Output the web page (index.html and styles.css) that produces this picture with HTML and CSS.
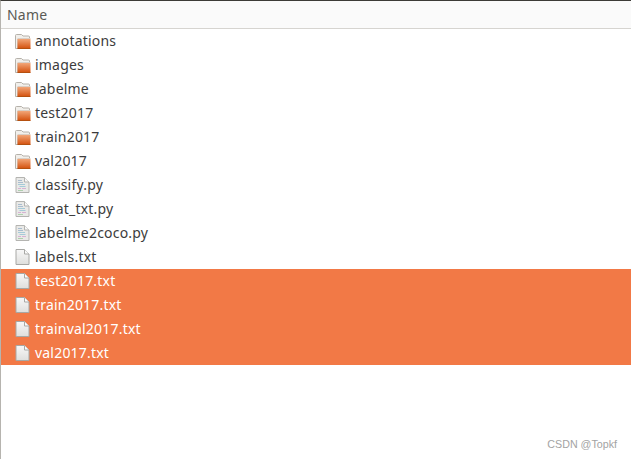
FILE: index.html
```html
<!DOCTYPE html>
<html lang="en">
  <head>
    <meta charset="UTF-8" />
    <title>Files</title>
    <link rel="stylesheet" href="styles.css">
  </head>
  <body>
    <svg class="defs" width="0" height="0">
      <defs>
        <linearGradient id="folder-fill" x1="0" y1="0" x2="0" y2="1">
          <stop offset="0" stop-color="#f2a678" />
          <stop offset="1" stop-color="#d4520f" />
        </linearGradient>
        <linearGradient id="page-fill" x1="0" y1="0" x2="0" y2="1">
          <stop offset="0" stop-color="#f8f8f8" />
          <stop offset="1" stop-color="#dfdfdd" />
        </linearGradient>
        <symbol id="folder" viewBox="0 0 16 16">
          <path d="M.5 15.500V2.500q0-1 1-1h5l1.500 1.500h5.500q1 0 1 1v2H3v9.500z" fill="#f1efeb" stroke="#b5b1aa" />
          <path d="M2.500 6h13v9.500h-13z" fill="url(#folder-fill)" />
          <path d="M2.500 5.500h13" stroke="#d9cfc6" fill="none" />
          <path d="M2.500 15.500h13" stroke="#b5500f" fill="none" />
        </symbol>
        <symbol id="text-file" viewBox="0 0 16 16">
          <path d="M1 .5h8.500l4.500 4.500v10.500H1z" fill="url(#page-fill)" stroke="#a8a8a5" />
          <path d="M9.500 .5v4.500h4.500" fill="#fbfbfb" stroke="#a8a8a5" />
        </symbol>
        <symbol id="script-file" viewBox="0 0 16 16">
          <path d="M1 .5h8.500l4.500 4.500v10.500H1z" fill="#e9e9e7" stroke="#b4b4b1" />
          <path d="M9.500 .5v4.500h4.500" fill="#f8f8f8" stroke="#b4b4b1" />
          <path d="M3 3.500h4M3 5.500h5" stroke="#a9bdcf" fill="none" />
          <path d="M3 7.500h7M4.500 9.500h6" stroke="#a5cad8" fill="none" />
          <path d="M3 11.500h3M7 11.500h4" stroke="#d6b3d3" fill="none" />
          <path d="M3 13.500h5" stroke="#aecfae" fill="none" />
        </symbol>
      </defs>
    </svg>

    <div class="header">Name</div>
    <ul class="file-list">
      <li class="row"><svg class="icon"><use href="#folder" /></svg>annotations</li>
      <li class="row"><svg class="icon"><use href="#folder" /></svg>images</li>
      <li class="row"><svg class="icon"><use href="#folder" /></svg>labelme</li>
      <li class="row"><svg class="icon"><use href="#folder" /></svg>test2017</li>
      <li class="row"><svg class="icon"><use href="#folder" /></svg>train2017</li>
      <li class="row"><svg class="icon"><use href="#folder" /></svg>val2017</li>
      <li class="row"><svg class="icon"><use href="#script-file" /></svg>classify.py</li>
      <li class="row"><svg class="icon"><use href="#script-file" /></svg>creat_txt.py</li>
      <li class="row"><svg class="icon"><use href="#script-file" /></svg>labelme2coco.py</li>
      <li class="row"><svg class="icon"><use href="#text-file" /></svg>labels.txt</li>
      <li class="row selected"><svg class="icon"><use href="#text-file" /></svg>test2017.txt</li>
      <li class="row selected"><svg class="icon"><use href="#text-file" /></svg>train2017.txt</li>
      <li class="row selected"><svg class="icon"><use href="#text-file" /></svg>trainval2017.txt</li>
      <li class="row selected"><svg class="icon"><use href="#text-file" /></svg>val2017.txt</li>
    </ul>
    <div class="watermark">CSDN @Topkf</div>
  </body>
</html>
```

FILE: styles.css
```css
html,
body {
  height: 100%;
}
body {
  margin: 0;
  box-sizing: border-box;
  border-top: 1px solid #3c3b37;
  border-left: 1px solid #b6b4af;
  background-color: #fff;
  color: #3c3c3c;
  font-family: "Noto Sans", "Open Sans", sans-serif;
  font-size: 14px;
  letter-spacing: 0.2px;
  overflow: hidden;
}
.defs {
  position: absolute;
}
.header {
  height: 27px;
  line-height: 27px;
  padding-left: 6px;
  border-bottom: 1px solid #d6d4d0;
  background-color: #fafafa;
  color: #5a5a55;
}
.file-list {
  margin: 0;
  padding: 0;
  list-style: none;
}
.row {
  display: flex;
  align-items: center;
  height: 24px;
  padding-left: 14px;
  line-height: 22px;
}
.row.selected {
  background-color: #f27946;
  color: #fff;
}
.icon {
  width: 16px;
  height: 16px;
  margin-right: 4px;
  flex: none;
}
.watermark {
  position: absolute;
  right: 14px;
  bottom: 9px;
  color: #a3a3a3;
  font-family: "Liberation Sans", sans-serif;
  font-size: 10.7px;
  letter-spacing: 0;
}
```
